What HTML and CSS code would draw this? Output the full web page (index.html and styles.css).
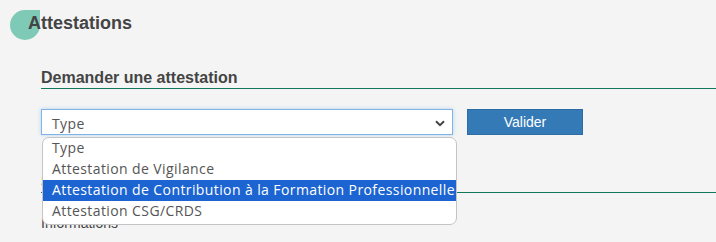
FILE: index.html
```html
<!DOCTYPE html>
<html lang="fr">
<head>
<meta charset="utf-8">
<title>Attestations</title>
<link rel="stylesheet" href="styles.css">
</head>
<body>
<div class="page">
  <header class="page-title">
    <span class="title-dot"></span>
    <h1>Attestations</h1>
  </header>

  <section class="block">
    <h2 class="block-title">Demander une attestation</h2>
    <div class="form-row">
      <div class="select-wrap">
        <div class="select">
          <span>Type</span>
          <svg class="chevron" width="10" height="7" viewBox="0 0 10 7"><path d="M1 1.2 L5 5.2 L9 1.2" fill="none" stroke="#444" stroke-width="2"/></svg>
        </div>
        <ul class="options">
          <li>Type</li>
          <li>Attestation de Vigilance</li>
          <li class="selected">Attestation de Contribution à la Formation Professionnelle</li>
          <li>Attestation CSG/CRDS</li>
        </ul>
      </div>
      <button class="btn">Valider</button>
    </div>
  </section>

  <section class="block second">
    <h2 class="block-title">Suivi des demandes</h2>
    <p class="info">Informations</p>
  </section>
</div>
</body>
</html>
```

FILE: styles.css
```css
html, body {
  margin: 0;
  padding: 0;
  background: #f4f4f4;
}
body {
  font-family: "Liberation Sans", Arial, sans-serif;
  color: #444;
  width: 716px;
  height: 242px;
  overflow: hidden;
}
.page {
  display: flex;
  flex-direction: column;
}
.page-title {
  position: relative;
  padding: 13px 0 0 28px;
}
.title-dot {
  position: absolute;
  left: 10px;
  top: 10px;
  width: 30px;
  height: 30px;
  background: #7ecab6;
  border-radius: 50% 0 50% 50%;
}
.page-title h1 {
  position: relative;
  margin: 0;
  font-size: 18px;
  line-height: 21px;
  font-weight: bold;
  color: #444;
}
.block {
  margin-left: 41px;
  margin-top: 35px;
}
.block.second {
  margin-top: 38px;
}
.block-title {
  margin: 0;
  font-size: 16px;
  line-height: 18px;
  font-weight: bold;
  color: #444;
  padding-bottom: 1px;
  border-bottom: 1px solid #12785b;
}
.form-row {
  display: flex;
  align-items: flex-start;
  gap: 14px;
  margin-top: 20px;
}
.select-wrap {
  position: relative;
  width: 412px;
}
.select {
  box-sizing: border-box;
  height: 26px;
  display: flex;
  align-items: center;
  justify-content: space-between;
  padding: 2px 7px 0 10px;
  background: #fff;
  border: 1px solid #80b4e6;
  box-shadow: 0 0 4px rgba(102, 175, 233, 0.45);
  font-family: "Open Sans", "Lato", sans-serif;
  font-size: 14px;
  letter-spacing: 0.4px;
  color: #555;
}
.chevron {
  display: block;
}
.options {
  position: absolute;
  left: 1px;
  top: 28px;
  width: 415px;
  box-sizing: border-box;
  margin: 0;
  padding: 0 0 2px 0;
  list-style: none;
  background: #fff;
  border: 1px solid #c4c4c4;
  border-radius: 7px;
  overflow: hidden;
  z-index: 2;
  font-family: "Open Sans", "Lato", sans-serif;
  font-size: 14px;
  letter-spacing: 0.4px;
  color: #555;
}
.options li {
  height: 21px;
  line-height: 20px;
  padding-left: 9px;
  white-space: nowrap;
}
.options li.selected {
  background: #1b64d2;
  color: #fff;
}
.btn {
  width: 116px;
  height: 26px;
  margin: 0;
  padding: 0;
  background: #337ab7;
  border: 1px solid #2e6da4;
  color: #fff;
  font-family: "Liberation Sans", Arial, sans-serif;
  font-size: 14px;
}
.info {
  margin: 22px 0 0 0;
  font-size: 14px;
  line-height: 16px;
  color: #444;
}
```
